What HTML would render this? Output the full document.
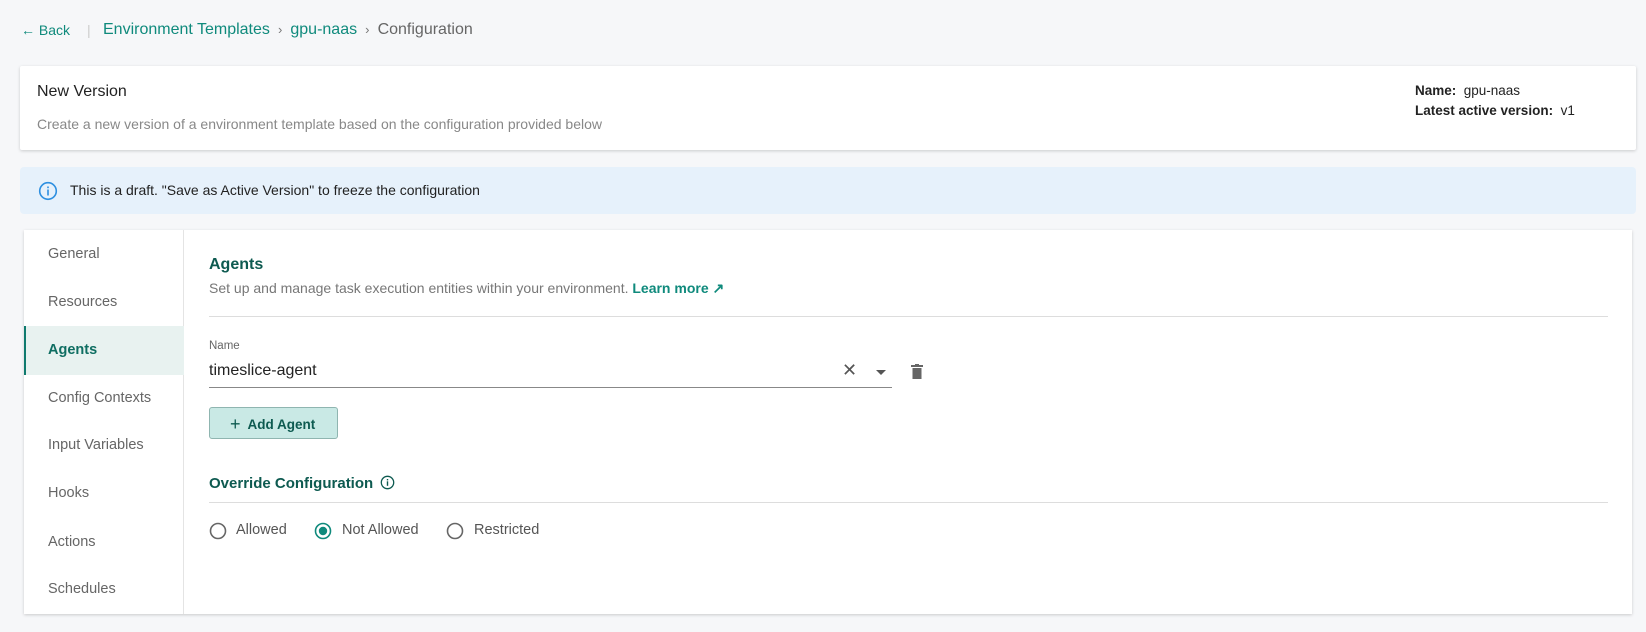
<!DOCTYPE html>
<html><head><style>
*{box-sizing:border-box;margin:0;padding:0}
body{width:1646px;height:632px;background:#f6f7f9;font-family:"Liberation Sans",Arial,sans-serif;position:relative;overflow:hidden;color:#222}
.a{position:absolute;white-space:nowrap}
.teal{color:#0f8a7c}
.card{position:absolute;background:#fff;box-shadow:0 1px 3px rgba(0,0,0,.18)}
.nav{position:absolute;left:24px;font-size:14.5px;color:#666}
</style></head><body>
<div class="a teal" style="left:21px;top:22px;font-size:14px">&#8592; Back</div>
<div class="a" style="left:87px;top:22px;font-size:14px;color:#ccc">|</div>
<div class="a" style="left:103px;top:21px;font-size:16px"><span class="teal">Environment Templates</span> <span style="color:#777;font-size:13px">&nbsp;›&nbsp;</span> <span class="teal">gpu-naas</span> <span style="color:#777;font-size:13px">&nbsp;›&nbsp;</span> <span style="color:#666">Configuration</span></div>

<div class="card" style="left:20px;top:66px;width:1616px;height:84px;border-radius:2px">
<div class="a" style="left:17px;top:17px;font-size:16px;color:#222">New Version</div>
<div class="a" style="left:17px;top:50px;font-size:14px;color:#888">Create a new version of a environment template based on the configuration provided below</div>
<div class="a" style="left:1395px;top:17px;font-size:13.5px"><b>Name:</b>&nbsp; gpu-naas</div>
<div class="a" style="left:1395px;top:37px;font-size:13.5px"><b>Latest active version:</b>&nbsp; v1</div>
</div>

<div style="position:absolute;left:20px;top:167px;width:1616px;height:47px;background:#e6f1fb;border-radius:4px">
<svg class="a" style="left:18px;top:14px" width="20" height="20" viewBox="0 0 20 20"><circle cx="10" cy="10" r="8.3" fill="none" stroke="#2d8fe0" stroke-width="1.6"/><rect x="9.2" y="8.5" width="1.6" height="6" fill="#2d8fe0"/><rect x="9.2" y="5.5" width="1.6" height="1.7" fill="#2d8fe0"/></svg>
<div class="a" style="left:50px;top:15px;font-size:14px;color:#222">This is a draft. "Save as Active Version" to freeze the configuration</div>
</div>

<div class="card" style="left:24px;top:230px;width:1608px;height:384px">
<div style="position:absolute;left:0;top:0;width:160px;height:384px;border-right:1px solid #e4e4e4"></div>
<div style="position:absolute;left:0;top:96px;width:160px;height:49px;background:#e8f2f0;border-left:2px solid #0f7a6e"></div>
<div class="nav" style="top:16px">General</div>
<div class="nav" style="top:64px">Resources</div>
<div class="nav" style="top:112px;color:#0f6e62;font-weight:bold">Agents</div>
<div class="nav" style="top:160px">Config Contexts</div>
<div class="nav" style="top:207px">Input Variables</div>
<div class="nav" style="top:255px">Hooks</div>
<div class="nav" style="top:304px">Actions</div>
<div class="nav" style="top:351px">Schedules</div>

<div class="a" style="left:185px;top:26px;font-size:16px;font-weight:bold;color:#0d5a50">Agents</div>
<div class="a" style="left:185px;top:50px;font-size:14px;color:#777">Set up and manage task execution entities within your environment. <b class="teal">Learn more ↗</b></div>
<div style="position:absolute;left:185px;top:86px;width:1399px;height:1px;background:#ddd"></div>
<div class="a" style="left:185px;top:110px;font-size:11.5px;color:#666">Name</div>
<div class="a" style="left:185px;top:132px;font-size:16px;color:#222">timeslice-agent</div>
<div style="position:absolute;left:185px;top:157px;width:683px;height:1px;background:#888"></div>
<div class="a" style="left:818px;top:130px;font-size:18px;color:#555">✕</div>
<div style="position:absolute;left:852px;top:140px;width:0;height:0;border-left:5px solid transparent;border-right:5px solid transparent;border-top:5px solid #555"></div>
<svg class="a" style="left:887px;top:134px" width="12" height="15" viewBox="0 0 12 15"><rect x="0" y="1" width="12" height="2" fill="#666"/><rect x="4" y="0" width="4" height="2" fill="#666"/><rect x="1.5" y="4" width="9" height="11" fill="#666"/></svg>
<div style="position:absolute;left:185px;top:177px;width:129px;height:32px;background:#c9e9e5;border:1px solid #8fb5b0;border-radius:3px;font-size:13.5px;font-weight:bold;color:#0d5a50;line-height:30px;padding-left:20px"><span style="font-size:18px;font-weight:normal;position:relative;top:1px">+</span>&nbsp; Add Agent</div>
<div class="a" style="left:185px;top:245px;font-size:15px;font-weight:bold;color:#0d5a50">Override Configuration</div>
<svg class="a" style="left:356px;top:245px" width="15" height="15" viewBox="0 0 15 15"><circle cx="7.5" cy="7.5" r="6.2" fill="none" stroke="#0d5a50" stroke-width="1.3"/><rect x="6.8" y="6.3" width="1.4" height="4.5" fill="#0d5a50"/><rect x="6.8" y="4" width="1.4" height="1.4" fill="#0d5a50"/></svg>
<div style="position:absolute;left:185px;top:272px;width:1399px;height:1px;background:#ddd"></div>
<svg class="a" style="left:185px;top:292px" width="18" height="18"><circle cx="9" cy="9" r="7.5" fill="none" stroke="#666" stroke-width="1.6"/></svg>
<div class="a" style="left:212px;top:292px;font-size:14.5px;color:#555">Allowed</div>
<svg class="a" style="left:290px;top:292px" width="18" height="18"><circle cx="9" cy="9" r="7.5" fill="none" stroke="#0f8a7c" stroke-width="1.6"/><circle cx="9" cy="9" r="4.2" fill="#0f8a7c"/></svg>
<div class="a" style="left:318px;top:292px;font-size:14.5px;color:#555">Not Allowed</div>
<svg class="a" style="left:422px;top:292px" width="18" height="18"><circle cx="9" cy="9" r="7.5" fill="none" stroke="#666" stroke-width="1.6"/></svg>
<div class="a" style="left:450px;top:292px;font-size:14.5px;color:#555">Restricted</div>
</div>
</body></html>
